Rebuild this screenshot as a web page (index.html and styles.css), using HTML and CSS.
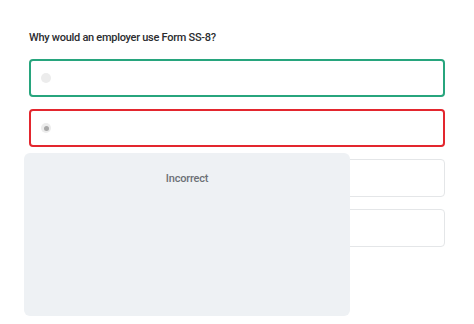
FILE: index.html
```html
<!DOCTYPE html>
<html>
<head>
<meta charset="utf-8">
<link rel="stylesheet" href="styles.css">
</head>
<body>
<div class="quiz">
  <p class="question">Why would an employer use Form SS-8?</p>
  <div class="options">
    <div class="option correct"><span class="radio"></span></div>
    <div class="option wrong"><span class="radio checked"></span></div>
    <div class="option"></div>
    <div class="option"></div>
  </div>
  <div class="feedback">
    <span class="feedback-title">Incorrect</span>
  </div>
</div>
</body>
</html>
```
FILE: styles.css
```css
html, body {
  margin: 0;
  padding: 0;
  background: #ffffff;
}
.quiz {
  position: relative;
  width: 474px;
  height: 324px;
  box-sizing: border-box;
  padding: 30px 29px 0 29px;
  font-family: Roboto, "Noto Sans", sans-serif;
}
.question {
  margin: 0 0 14px 0;
  font-size: 11px;
  font-weight: 500;
  letter-spacing: -0.28px;
  color: #2b2d30;
  line-height: 15px;
}
.options {
  display: flex;
  flex-direction: column;
  gap: 12px;
  width: 416px;
}
.option {
  height: 38px;
  box-sizing: border-box;
  border: 1.5px solid #e4e6e8;
  border-radius: 4px;
  display: flex;
  align-items: center;
  padding-left: 10px;
}
.option.correct {
  border: 2px solid #27a57d;
}
.option.wrong {
  border: 2px solid #e3262e;
}
.radio {
  width: 10px;
  height: 10px;
  border-radius: 50%;
  background: #ececec;
  display: flex;
  align-items: center;
  justify-content: center;
}
.radio.checked::after {
  content: "";
  width: 5px;
  height: 5px;
  border-radius: 50%;
  background: #a8a8a8;
}
.feedback {
  position: absolute;
  left: 24px;
  top: 153px;
  width: 326px;
  height: 163px;
  background: #eef1f4;
  border-radius: 6px;
  display: flex;
  justify-content: center;
  padding-top: 18px;
  box-sizing: border-box;
}
.feedback-title {
  font-size: 11px;
  font-weight: 500;
  letter-spacing: -0.2px;
  color: #6c7076;
  line-height: 15px;
}
```
